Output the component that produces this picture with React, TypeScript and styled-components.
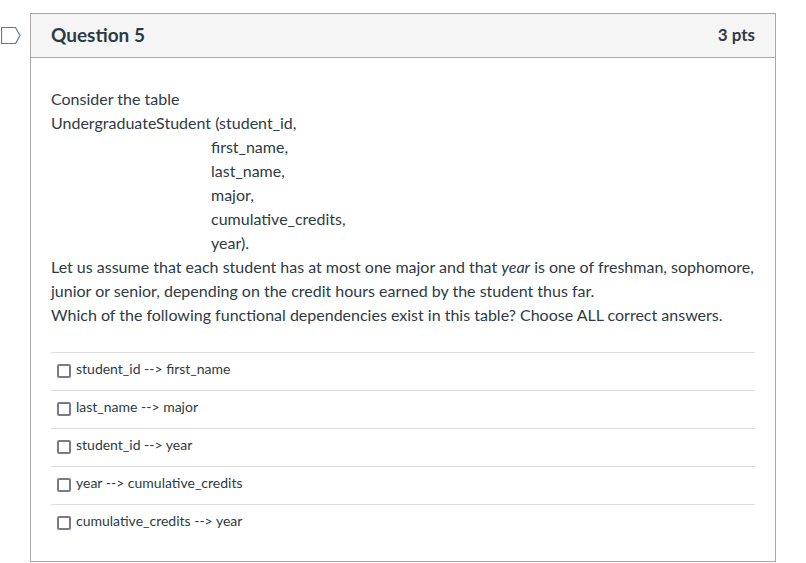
import React from "react";
import styled, { createGlobalStyle } from "styled-components";

const Global = createGlobalStyle`
  html, body { margin: 0; padding: 0; background: #ffffff; }
  body { font-family: Lato, "Noto Sans", "Liberation Sans", sans-serif; color: #2d3b45; }
`;

const Page = styled.div`
  display: flex;
  align-items: flex-start;
  padding-top: 13px;
  width: 806px;
`;

const Gutter = styled.div`
  width: 30px;
  flex: none;
  display: flex;
  justify-content: flex-start;
  padding-top: 14px;
  padding-left: 1px;
  box-sizing: border-box;
`;

const Card = styled.div`
  width: 746px;
  box-sizing: border-box;
  border: 1px solid #a8a8a8;
  border-bottom: none;
  min-height: 549px;
  display: flex;
  flex-direction: column;
`;

const Header = styled.div`
  height: 44px;
  box-sizing: border-box;
  display: flex;
  align-items: center;
  justify-content: space-between;
  padding: 0 20px 1px;
  background: #f5f5f5;
  border-bottom: 1px solid #a8a8a8;
`;

const Title = styled.h2`
  margin: 0;
  font-size: 19px;
  line-height: 24px;
  font-weight: 700;
  color: #2d3b45;
`;

const Points = styled.span`
  font-size: 17px;
  line-height: 24px;
  font-weight: 700;
  color: #2d3b45;
`;

const Body = styled.div`
  padding: 29px 20px 17px;
  flex: 1;
  border-bottom: 1px solid #a8a8a8;
`;

const Line = styled.p<{ $indent?: boolean }>`
  margin: 0;
  font-size: 16px;
  line-height: 24px;
  padding-left: ${(p) => (p.$indent ? "160px" : "0")};
`;

const Answers = styled.div`
  margin-top: 25px;
  display: flex;
  flex-direction: column;
`;

const Answer = styled.label`
  display: flex;
  align-items: center;
  height: 38px;
  box-sizing: border-box;
  border-top: 1px solid #dcdcdc;
  padding-left: 6px;
  padding-bottom: 7px;
  gap: 5px;
  font-size: 14px;
  color: #2d3b45;
`;

const Box = styled.span`
  width: 14px;
  height: 14px;
  box-sizing: border-box;
  border: 2px solid #7c7a88;
  border-radius: 2px;
  background: #fff;
  flex: none;
  margin-top: 6px;
`;

const answers = [
  "student_id --> first_name",
  "last_name --> major",
  "student_id --> year",
  "year --> cumulative_credits",
  "cumulative_credits --> year",
];

export default function App() {
  return (
    <>
      <Global />
      <Page>
        <Gutter>
          <svg width="20" height="17" viewBox="0 0 20 17">
            <path
              d="M0.5 0.5 H14.5 L19 8.5 L14.5 16.5 H0.5 Z"
              fill="none"
              stroke="#5b7f9c"
              strokeWidth="1.2"
            />
          </svg>
        </Gutter>
        <Card>
          <Header>
            <Title>Question 5</Title>
            <Points>3 pts</Points>
          </Header>
          <Body>
            <Line>Consider the table</Line>
            <Line>UndergraduateStudent (student_id,</Line>
            <Line $indent>first_name,</Line>
            <Line $indent>last_name,</Line>
            <Line $indent>major,</Line>
            <Line $indent>cumulative_credits,</Line>
            <Line $indent>year).</Line>
            <Line>
              Let us assume that each student has at most one major and that <em>year</em> is one of
              freshman, sophomore, junior or senior, depending on the credit hours earned by the
              student thus far.
            </Line>
            <Line>
              Which of the following functional dependencies exist in this table? Choose ALL correct
              answers.
            </Line>
            <Answers>
              {answers.map((a) => (
                <Answer key={a}>
                  <Box />
                  {a}
                </Answer>
              ))}
            </Answers>
          </Body>
        </Card>
      </Page>
    </>
  );
}
